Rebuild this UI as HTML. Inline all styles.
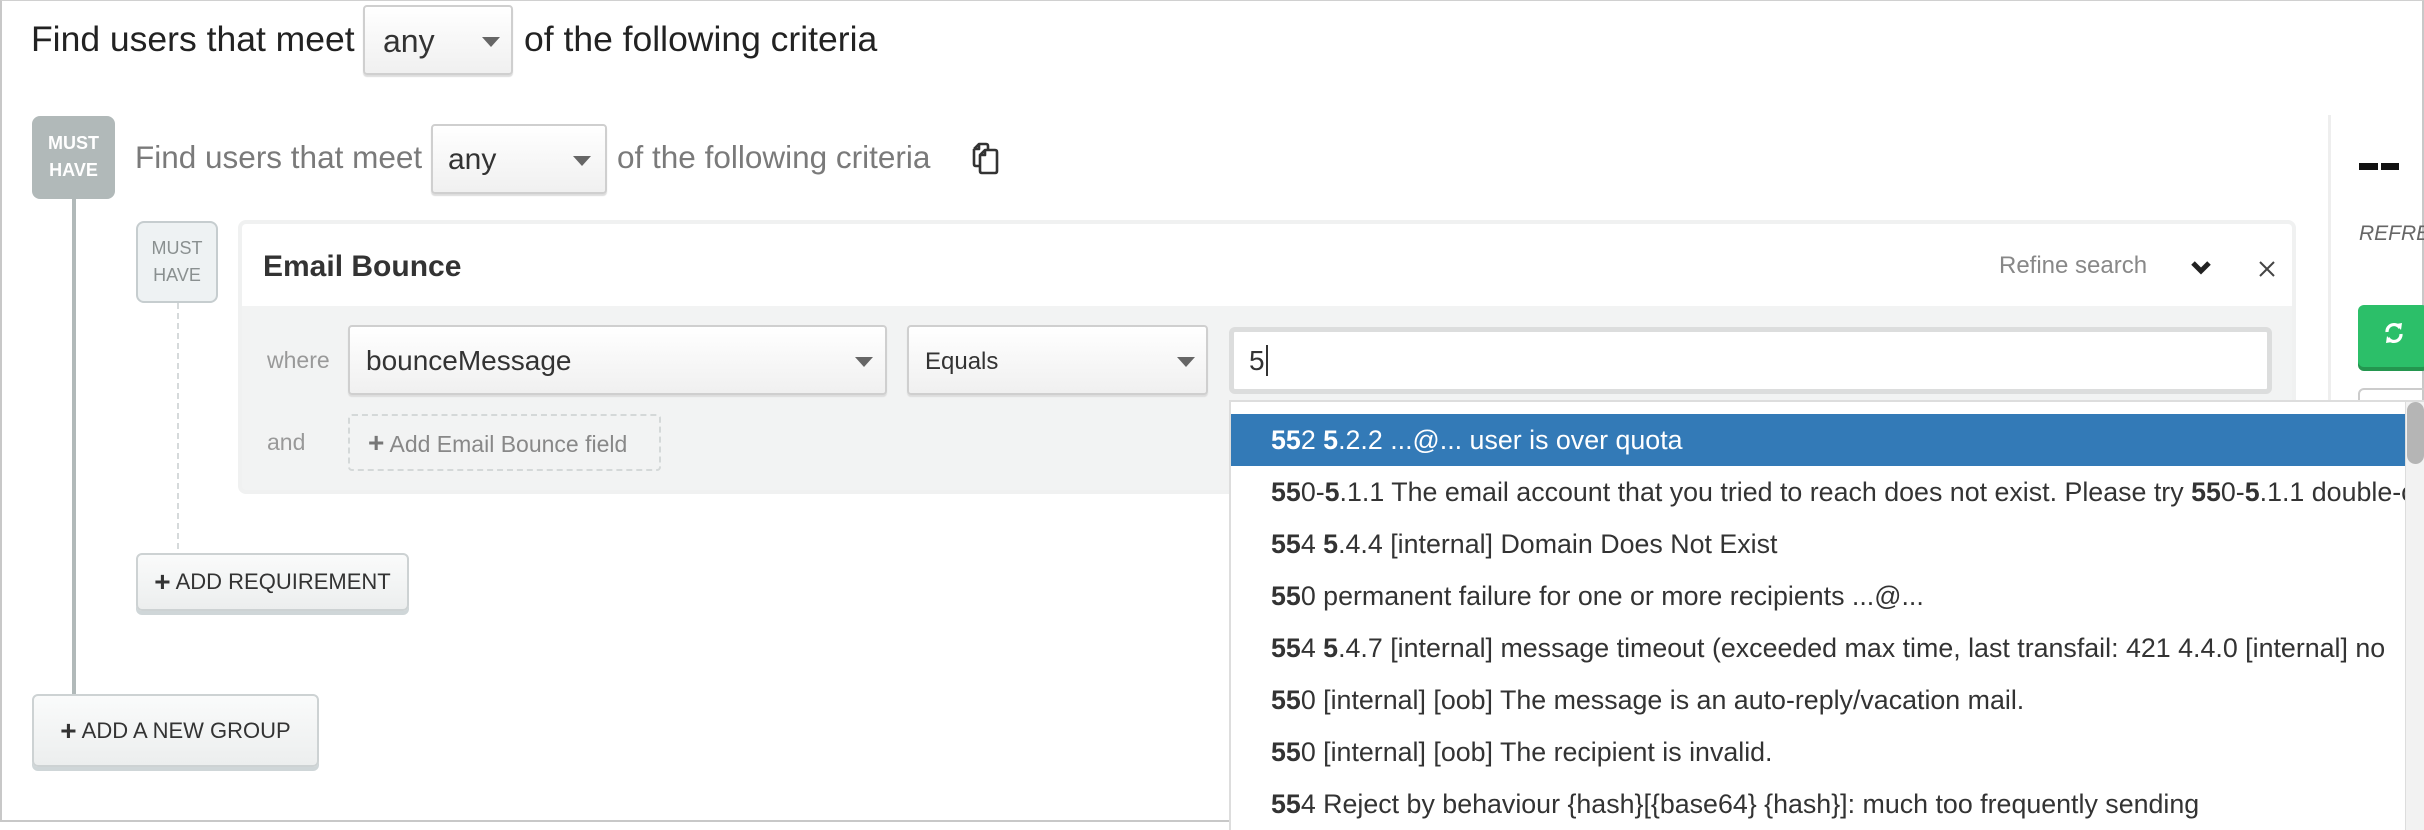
<!DOCTYPE html>
<html><head><meta charset="utf-8"><style>
*{box-sizing:border-box;margin:0;padding:0}
body{width:2424px;height:822px;overflow:hidden;background:#fff;font-family:"Liberation Sans",sans-serif;position:relative;color:#333}
.a{position:absolute}
.frame{left:0;top:0;width:2424px;height:822px;border:2px solid #c8c8c8;border-top:1px solid #d0d0d0}
.sel{border:2px solid #cfcfcf;border-radius:4px;background:linear-gradient(#fff,#f0f0f0);box-shadow:0 2px 1px #ddd}
.caret{position:absolute;width:0;height:0;border-left:9px solid transparent;border-right:9px solid transparent;border-top:10px solid #666}
.btn{border:2px solid #cdd2d3;border-radius:6px;background:linear-gradient(#fafbfb,#eceeee);box-shadow:0 4px 0 #cfd6d8;font-size:22px;color:#333;display:flex;align-items:center;justify-content:center}
.row{position:absolute;left:0;height:52px;width:100%;line-height:52px;padding-left:40px;font-size:26.8px;color:#333;white-space:nowrap;overflow:hidden}
.row b{font-weight:bold}
</style></head><body>
<div class="a frame"></div>

<div class="a" style="left:31px;top:19px;font-size:35.5px;color:#222">Find users that meet</div>
<div class="a sel" style="left:363px;top:5px;width:150px;height:70px"><span class="a" style="left:18px;top:16px;font-size:32px;color:#333">any</span><div class="caret" style="left:117px;top:30px"></div></div>
<div class="a" style="left:524px;top:19px;font-size:35.5px;color:#222">of the following criteria</div>

<div class="a" style="left:32px;top:116px;width:83px;height:83px;background:#b1b9b9;border-radius:8px;color:#fff;font-weight:bold;font-size:18px;text-align:center;line-height:27px;padding-top:14px">MUST<br>HAVE</div>
<div class="a" style="left:72px;top:199px;width:4px;height:495px;background:#b1b9b9"></div>

<div class="a" style="left:135px;top:139px;font-size:31.5px;color:#7a7a7a">Find users that meet</div>
<div class="a sel" style="left:431px;top:124px;width:176px;height:70px"><span class="a" style="left:15px;top:17px;font-size:30px;color:#333">any</span><div class="caret" style="left:140px;top:30px"></div></div>
<div class="a" style="left:617px;top:139px;font-size:31.5px;color:#7a7a7a">of the following criteria</div>
<svg class="a" style="left:966px;top:138px" width="42" height="40" viewBox="0 0 42 40"><path d="M8 11 L13 6 H20 Q22 6 22 8 V12 M8 11 V26 Q8 28 10 28 H14 M8 11 H13 V6" fill="none" stroke="#333" stroke-width="2.6" stroke-linejoin="round"/><path d="M14 17 L19 12 H29 Q31 12 31 14 V33 Q31 35 29 35 H16 Q14 35 14 33 Z M14 17 H19 V12" fill="#fff" stroke="#333" stroke-width="2.6" stroke-linejoin="round"/></svg>

<div class="a" style="left:136px;top:221px;width:82px;height:82px;background:#eef2f3;border:2px solid #c6cdcf;border-radius:8px;color:#8a9090;font-size:18px;text-align:center;line-height:27px;padding-top:12px">MUST<br>HAVE</div>
<div class="a" style="left:177px;top:303px;width:0;height:246px;border-left:2px dashed #d6dadb"></div>

<div class="a" style="left:238px;top:220px;width:2058px;height:274px;border:4px solid #f0f1f1;border-radius:8px;background:#f2f3f3;overflow:hidden">
 <div class="a" style="left:0;top:0;width:100%;height:82px;background:#fff"></div>
 <div class="a" style="left:21px;top:26px;font-size:30px;font-weight:bold;color:#333">Email Bounce</div>
 <div class="a" style="left:1757px;top:28px;font-size:24px;color:#888">Refine search</div>
 <svg class="a" style="left:1948px;top:36px" width="22" height="16" viewBox="0 0 22 16"><path d="M3 3 L11 11 L19 3" fill="none" stroke="#222" stroke-width="5"/></svg>
 <svg class="a" style="left:2016px;top:36px" width="18" height="18" viewBox="0 0 18 18"><path d="M2 2 L16 16 M16 2 L2 16" stroke="#444" stroke-width="2"/></svg>
 <div class="a" style="left:25px;top:123px;font-size:23px;color:#999">where</div>
 <div class="a" style="left:25px;top:205px;font-size:23px;color:#999">and</div>
</div>

<div class="a sel" style="left:348px;top:325px;width:539px;height:70px"><span class="a" style="left:16px;top:18px;font-size:28px;color:#333">bounceMessage</span><div class="caret" style="left:505px;top:30px"></div></div>
<div class="a sel" style="left:907px;top:325px;width:301px;height:70px"><span class="a" style="left:16px;top:21px;font-size:24px;color:#333">Equals</span><div class="caret" style="left:268px;top:30px"></div></div>
<div class="a" style="left:348px;top:414px;width:313px;height:57px;border:2px dashed #d4d8d8;border-radius:4px;font-size:23px;color:#888;line-height:53px;padding-left:18px"><b style="color:#777;font-size:28px">+</b> Add Email Bounce field</div>

<div class="a" style="left:1229px;top:327px;width:1043px;height:67px;border:5px solid #dcdddd;border-radius:6px;background:#fff"><span class="a" style="left:15px;top:13px;font-size:28px;color:#333">5<span style="border-left:2px solid #333;margin-left:1px"></span></span></div>

<div class="a" style="left:2328px;top:115px;width:3px;height:707px;background:#eeeeee"></div>
<div class="a" style="left:2359px;top:163px;width:19px;height:7px;background:#111"></div>
<div class="a" style="left:2381px;top:163px;width:18px;height:7px;background:#111"></div>
<div class="a" style="left:2359px;top:222px;font-size:21px;font-style:italic;color:#666">REFRE</div>
<div class="a" style="left:2358px;top:305px;width:70px;height:62px;background:#2cbf69;border-radius:6px;box-shadow:0 4px 0 #24964f"></div>
<svg class="a" style="left:2383px;top:320px" width="22" height="26" viewBox="0 0 22 26"><path d="M4 12 A7 7 0 0 1 17 8 M18 14 A7 7 0 0 1 5 18" fill="none" stroke="#fff" stroke-width="3.2"/><path d="M13 4 L19 3 L18 10Z M9 22 L3 23 L4 16Z" fill="#fff"/></svg>
<div class="a" style="left:2358px;top:388px;width:70px;height:60px;border:2px solid #ccc;border-radius:6px"></div>

<div class="a" style="left:1229px;top:400px;width:1195px;height:430px;background:#fff;border-top:2px solid #ddd;border-left:2px solid #ddd;overflow:hidden">
 <div class="row" style="top:12px;background:#337ab7;color:#fff"><b>55</b>2 <b>5</b>.2.2 ...@... user is over quota</div>
 <div class="row" style="top:64px"><b>55</b>0-<b>5</b>.1.1 The email account that you tried to reach does not exist. Please try <b>55</b>0-<b>5</b>.1.1 double-checking</div>
 <div class="row" style="top:116px"><b>55</b>4 <b>5</b>.4.4 [internal] Domain Does Not Exist</div>
 <div class="row" style="top:168px"><b>55</b>0 permanent failure for one or more recipients ...@...</div>
 <div class="row" style="top:220px"><b>55</b>4 <b>5</b>.4.7 [internal] message timeout (exceeded max time, last transfail: 421 4.4.0 [internal] no</div>
 <div class="row" style="top:272px"><b>55</b>0 [internal] [oob] The message is an auto-reply/vacation mail.</div>
 <div class="row" style="top:324px"><b>55</b>0 [internal] [oob] The recipient is invalid.</div>
 <div class="row" style="top:376px"><b>55</b>4 Reject by behaviour {hash}[{base64} {hash}]: much too frequently sending</div>
 <div class="a" style="left:1174px;top:0;width:21px;height:430px;background:#f2f2f2;border-left:1px solid #ddd"></div>
 <div class="a" style="left:1176px;top:0;width:17px;height:62px;background:#b5b5b5;border-radius:9px"></div>
</div>

<div class="a btn" style="left:136px;top:553px;width:273px;height:58px"><b style="font-size:28px;margin-right:5px">+</b>ADD REQUIREMENT</div>
<div class="a btn" style="left:32px;top:694px;width:287px;height:73px"><b style="font-size:28px;margin-right:5px">+</b>ADD A NEW GROUP</div>
</body></html>
